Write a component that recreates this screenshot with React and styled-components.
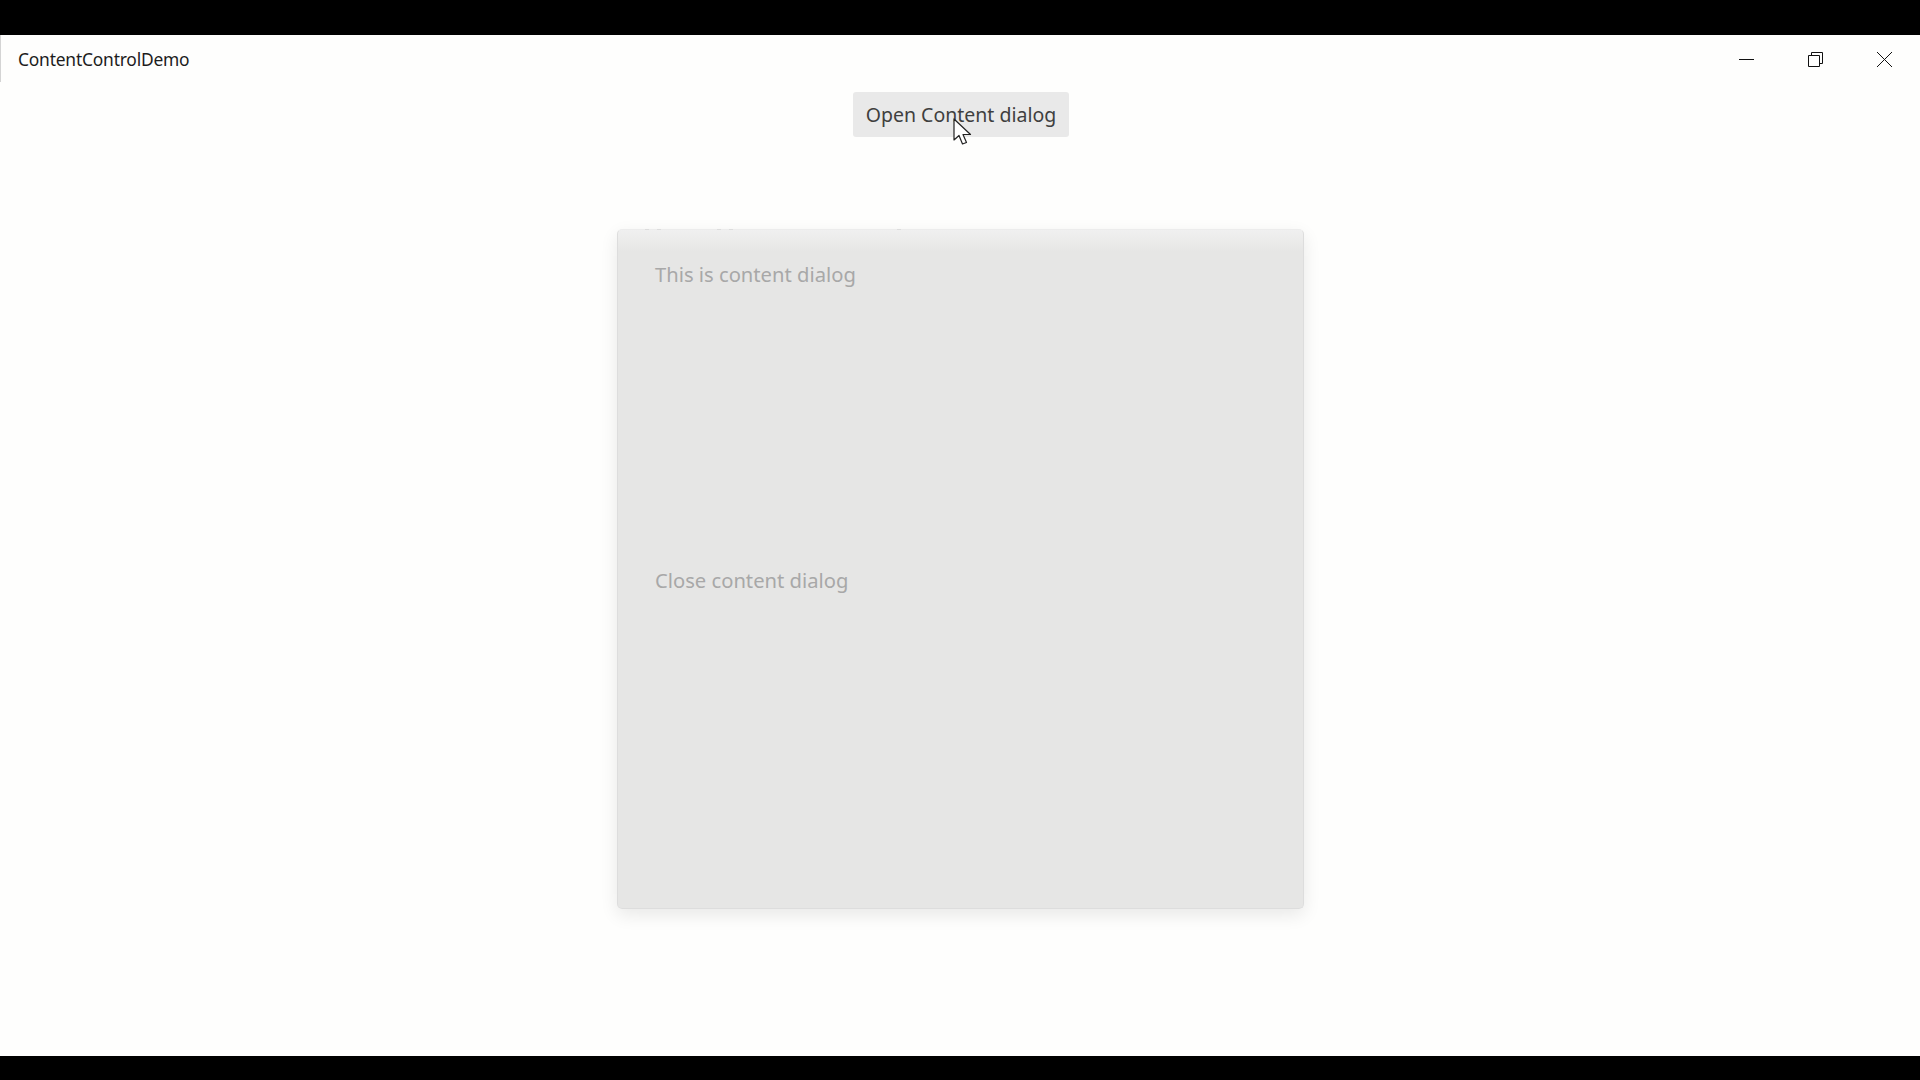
import React from 'react'
import styled, { createGlobalStyle } from 'styled-components'

const GlobalStyle = createGlobalStyle`
  html, body {
    margin: 0;
    padding: 0;
    height: 100%;
    background: #000;
  }
  body {
    font-family: "Noto Sans", "Open Sans", "Liberation Sans", sans-serif;
  }
`

const Screen = styled.div`
  width: 1920px;
  height: 1080px;
  display: flex;
  flex-direction: column;
  background: #000;
  overflow: hidden;
`

const LetterBox = styled.div`
  flex: 0 0 ${props => props.size}px;
  background: #000;
`

const AppWindow = styled.div`
  flex: 1;
  display: flex;
  flex-direction: column;
  background: #fefefd;
`

const TitleBar = styled.div`
  flex: 0 0 47px;
  display: flex;
  align-items: center;
  justify-content: space-between;
  padding: 0 1px 0 17px;
  border-left: 1px solid #d4d4d4;
`

const AppTitle = styled.span`
  font-size: 17.4px;
  color: #1c1c1c;
  letter-spacing: -0.2px;
`

const WindowControls = styled.div`
  display: flex;
  height: 100%;
`

const WindowButton = styled.div`
  width: 69px;
  display: flex;
  align-items: center;
  justify-content: center;
  padding-top: 1px;
`

const Content = styled.div`
  flex: 1;
  display: flex;
  flex-direction: column;
  align-items: center;
`

const OpenButton = styled.div`
  position: relative;
  margin-top: 10px;
  left: 1px;
  width: 216px;
  height: 45px;
  box-sizing: border-box;
  display: flex;
  align-items: center;
  justify-content: center;
  background: #e9e9e9;
  border-radius: 3px;
  color: #3f3f3f;
  font-size: 19.5px;
  white-space: nowrap;
`

const Cursor = styled.svg`
  position: absolute;
  left: 100px;
  top: 26px;
`

const Dialog = styled.div`
  position: relative;
  margin: 92px 0 0 1px;
  width: 687px;
  height: 680px;
  box-sizing: border-box;
  padding: 30px 37px 0;
  background: linear-gradient(#f0f0f0 0, #e6e6e5 22px);
  border: 1px solid #dddddd;
  border-top-color: #ececec;
  border-radius: 5px;
  box-shadow: 0 6px 18px rgba(0, 0, 0, 0.09);
  display: flex;
  flex-direction: column;
  gap: 278px;
`

// bits of the page text that peek out above the dialog's top edge
const Speck = styled.i`
  position: absolute;
  top: -1px;
  width: 4px;
  height: 1px;
  background: #dcdcdc;
`

const DialogText = styled.div`
  font-size: 20.2px;
  line-height: 28px;
  color: #a8a8a8;
`

const specks = [27, 39, 99, 111, 279]

function App() {
  return (
    <>
      <GlobalStyle />
      <Screen>
        <LetterBox size={35} />
        <AppWindow>
          <TitleBar>
            <AppTitle>ContentControlDemo</AppTitle>
            <WindowControls>
              <WindowButton>
                <svg width="15" height="15" viewBox="0 0 15 15">
                  <path d="M0 7.5H15" stroke="#111" strokeWidth="1" fill="none" />
                </svg>
              </WindowButton>
              <WindowButton>
                <svg width="15" height="15" viewBox="0 0 15 15">
                  <path d="M0.5 3.5H11.5V14.5H0.5Z M3.5 3.5V0.5H14.5V11.5H11.5" stroke="#111" strokeWidth="1" fill="none" />
                </svg>
              </WindowButton>
              <WindowButton>
                <svg width="15" height="15" viewBox="0 0 15 15">
                  <path d="M0 0L15 15M15 0L0 15" stroke="#111" strokeWidth="1" fill="none" />
                </svg>
              </WindowButton>
            </WindowControls>
          </TitleBar>
          <Content>
            <OpenButton>
              Open Content dialog
              <Cursor width="19" height="28" viewBox="0 0 19 28">
                <path
                  d="M1 1V22L6 17.5L9.5 26L13.5 24.5L10 16.5H17.5Z"
                  fill="#fff"
                  stroke="#222"
                  strokeWidth="1.2"
                  strokeLinejoin="round"
                />
              </Cursor>
            </OpenButton>
            <Dialog>
              {specks.map(x => <Speck key={x} style={{ left: x }} />)}
              <DialogText>This is content dialog</DialogText>
              <DialogText>Close content dialog</DialogText>
            </Dialog>
          </Content>
        </AppWindow>
        <LetterBox size={24} />
      </Screen>
    </>
  )
}

export default App
